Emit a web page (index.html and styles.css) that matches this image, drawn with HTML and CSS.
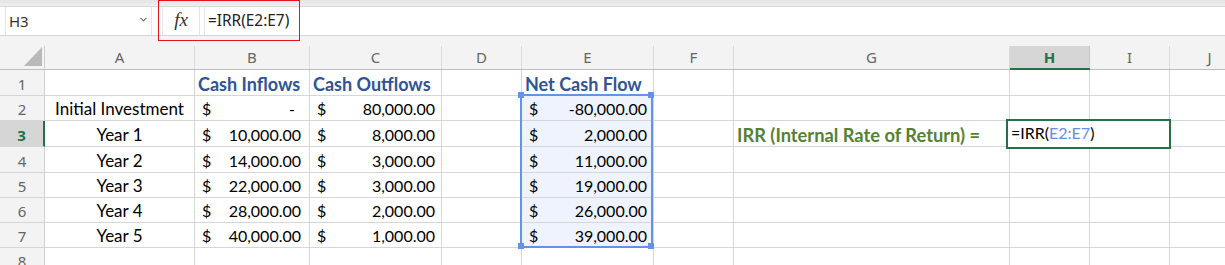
FILE: index.html
```html
<!DOCTYPE html>
<html>
<head>
<meta charset="utf-8">
<link rel="stylesheet" href="styles.css">
</head>
<body>
<div class="app">
  <div class="chrome"></div>
  <div class="fbar">
    <div class="namebox"><span class="nb-text">H3</span><svg class="chev" width="7" height="5" viewBox="0 0 7 5"><path d="M0.5 0.8 L3.5 3.8 L6.5 0.8" fill="none" stroke="#666" stroke-width="1.1"/></svg></div>
    <div class="fx">fx</div>
    <div class="formula">=IRR(E2:E7)</div>
  </div>
  <div class="sheet">
    <div class="row hdr">
      <div class="ch rhw"><span class="corner"><svg width="44" height="23" viewBox="0 0 44 23"><polygon points="42,1 42,20 24,20" fill="#b9b9b9"/></svg></span></div>
      <div class="ch cA"><span>A</span></div>
      <div class="ch cB"><span>B</span></div>
      <div class="ch cC"><span>C</span></div>
      <div class="ch cD"><span>D</span></div>
      <div class="ch cE"><span>E</span></div>
      <div class="ch cF"><span>F</span></div>
      <div class="ch cG"><span>G</span></div>
      <div class="ch cH on"><span>H</span></div>
      <div class="ch cI"><span>I</span></div>
      <div class="ch cJ"><span>J</span></div>
    </div>

    <div class="row h26">
      <div class="rh">1</div>
      <div class="c cA"></div>
      <div class="c cB head">Cash Inflows</div>
      <div class="c cC head">Cash Outflows</div>
      <div class="c cD"></div>
      <div class="c cE head">Net Cash Flow</div>
      <div class="c cF"></div>
      <div class="c cG"></div>
      <div class="c cH"></div>
      <div class="c cI"></div>
      <div class="c cJ"></div>
    </div>

    <div class="row h25">
      <div class="rh">2</div>
      <div class="c cA center">Initial Investment</div>
      <div class="c cB acc"><span>$</span><span class="dash">-</span></div>
      <div class="c cC acc"><span>$</span><span>80,000.00</span></div>
      <div class="c cD"></div>
      <div class="c cE acc sel"><span>$</span><span>-80,000.00</span></div>
      <div class="c cF"></div>
      <div class="c cG"></div>
      <div class="c cH"></div>
      <div class="c cI"></div>
      <div class="c cJ"></div>
    </div>

    <div class="row h26">
      <div class="rh on">3</div>
      <div class="c cA center">Year 1</div>
      <div class="c cB acc"><span>$</span><span>10,000.00</span></div>
      <div class="c cC acc"><span>$</span><span>8,000.00</span></div>
      <div class="c cD"></div>
      <div class="c cE acc sel"><span>$</span><span>2,000.00</span></div>
      <div class="c cF"></div>
      <div class="c cG irr">IRR (Internal Rate of Return) =</div>
      <div class="c cH"></div>
      <div class="c cI"></div>
      <div class="c cJ"></div>
    </div>

    <div class="row h26">
      <div class="rh">4</div>
      <div class="c cA center">Year 2</div>
      <div class="c cB acc"><span>$</span><span>14,000.00</span></div>
      <div class="c cC acc"><span>$</span><span>3,000.00</span></div>
      <div class="c cD"></div>
      <div class="c cE acc sel"><span>$</span><span>11,000.00</span></div>
      <div class="c cF"></div>
      <div class="c cG"></div>
      <div class="c cH"></div>
      <div class="c cI"></div>
      <div class="c cJ"></div>
    </div>

    <div class="row h25">
      <div class="rh">5</div>
      <div class="c cA center">Year 3</div>
      <div class="c cB acc"><span>$</span><span>22,000.00</span></div>
      <div class="c cC acc"><span>$</span><span>3,000.00</span></div>
      <div class="c cD"></div>
      <div class="c cE acc sel"><span>$</span><span>19,000.00</span></div>
      <div class="c cF"></div>
      <div class="c cG"></div>
      <div class="c cH"></div>
      <div class="c cI"></div>
      <div class="c cJ"></div>
    </div>

    <div class="row h25">
      <div class="rh">6</div>
      <div class="c cA center">Year 4</div>
      <div class="c cB acc"><span>$</span><span>28,000.00</span></div>
      <div class="c cC acc"><span>$</span><span>2,000.00</span></div>
      <div class="c cD"></div>
      <div class="c cE acc sel"><span>$</span><span>26,000.00</span></div>
      <div class="c cF"></div>
      <div class="c cG"></div>
      <div class="c cH"></div>
      <div class="c cI"></div>
      <div class="c cJ"></div>
    </div>

    <div class="row h25">
      <div class="rh">7</div>
      <div class="c cA center">Year 5</div>
      <div class="c cB acc"><span>$</span><span>40,000.00</span></div>
      <div class="c cC acc"><span>$</span><span>1,000.00</span></div>
      <div class="c cD"></div>
      <div class="c cE acc sel"><span>$</span><span>39,000.00</span></div>
      <div class="c cF"></div>
      <div class="c cG"></div>
      <div class="c cH"></div>
      <div class="c cI"></div>
      <div class="c cJ"></div>
    </div>

    <div class="row h25">
      <div class="rh r8">8</div>
      <div class="c cA"></div>
      <div class="c cB"></div>
      <div class="c cC"></div>
      <div class="c cD"></div>
      <div class="c cE"></div>
      <div class="c cF"></div>
      <div class="c cG"></div>
      <div class="c cH"></div>
      <div class="c cI"></div>
      <div class="c cJ"></div>
    </div>

    <div class="range"><i class="hd tl"></i><i class="hd tr"></i><i class="hd bl"></i><i class="hd br"></i></div>
    <div class="editor">=IRR(<span class="ref">E2:E7</span>)</div>
  </div>
  <div class="redbox"></div>
</div>
</body>
</html>
```

FILE: styles.css
```css
* { box-sizing: border-box; }
html, body { margin: 0; padding: 0; background: #fff; }

.app {
  position: relative;
  width: 1225px;
  height: 265px;
  overflow: hidden;
  background: #fff;
}

.chrome {
  height: 7px;
  background: linear-gradient(#e4e4e4, #efefef);
  border-bottom: 1px solid #d8d8d8;
}

.fbar {
  height: 29px;
  display: flex;
  align-items: stretch;
  border-bottom: 1px solid #d6d6d6;
  background: #fff;
  font-family: "Noto Sans", "Open Sans", sans-serif;
  color: #222;
}

.namebox {
  margin-left: 5px;
  width: 147px;
  border-left: 1px solid #e6e6e6;
  border-right: 1px solid #e6e6e6;
  display: flex;
  align-items: center;
  justify-content: space-between;
  padding: 0 4px 0 3px;
}
.nb-text { font-size: 15px; color: #333; line-height: 20px; padding-bottom: 1px; }
.chev { margin-bottom: 4px; }

.fx {
  margin-left: 10px;
  width: 38px;
  border-left: 1px solid #e6e6e6;
  border-right: 1px solid #e6e6e6;
  display: flex;
  align-items: center;
  justify-content: center;
  font-family: "Liberation Serif", "DejaVu Serif", serif;
  font-style: italic;
  font-size: 19px;
  color: #333;
  padding-bottom: 2px;
}

.formula {
  margin-left: 4px;
  flex: 1;
  border-left: 1px solid #e6e6e6;
  display: flex;
  align-items: center;
  padding-left: 3px;
  font-size: 15.4px;
  color: #222;
  padding-bottom: 1px;
}

.redbox {
  position: absolute;
  left: 158px;
  top: 0;
  width: 142px;
  height: 41px;
  border: 1px solid #e3141c;
}

.sheet {
  position: relative;
  font-family: Lato, "Liberation Sans", sans-serif;
  font-size: 17px;
  color: #000;
}

.row { display: flex; }
.row > * { flex-shrink: 0; }
.hdr { height: 34px; }
.h26 { height: 26px; }
.h25 { height: 25px; }

.rhw, .rh { width: 45px; }
.cA { width: 150px; }
.cB { width: 115px; }
.cC { width: 132px; }
.cD { width: 80px; }
.cE { width: 132px; }
.cF { width: 80px; }
.cG { width: 276px; }
.cH { width: 80px; }
.cI { width: 80px; }
.cJ { width: 80px; }

/* column headers */
.ch {
  background: #f3f3f3;
  padding-top: 10px;
  border-bottom: 1px solid #bdbdbd;
  font-family: "Noto Sans", "Open Sans", sans-serif;
  font-size: 15px;
  color: #666;
}
.ch > span {
  display: block;
  height: 23px;
  line-height: 23px;
  text-align: center;
  border-right: 1px solid #dadada;
}
.ch > .corner { border-right-color: #cfcfcf; }
.corner svg { display: block; }
.ch.on { border-bottom: 2px solid #217346; }
.ch.on > span {
  height: 22px;
  background: #d6d6d6;
  color: #217346;
  font-weight: 700;
  border-right-color: #c8c8c8;
}

/* row headers */
.rh {
  background: #f3f3f3;
  border-right: 1px solid #cfcfcf;
  border-bottom: 1px solid #d6d6d6;
  font-family: "Noto Sans", "Open Sans", sans-serif;
  font-size: 15px;
  color: #666;
  display: flex;
  align-items: flex-end;
  justify-content: center;
  line-height: 20px;
  padding-bottom: 1px;
}
.rh.r8 { align-items: flex-start; padding-top: 3px; }
.rh.on {
  background: #d6d6d6;
  color: #217346;
  font-weight: 700;
  border-right: 2px solid #217346;
}

/* cells */
.c {
  border-right: 1px solid #d6d6d6;
  border-bottom: 1px solid #d6d6d6;
  display: flex;
  align-items: flex-end;
  line-height: 20px;
  padding: 0 3px 1px 3px;
  white-space: nowrap;
  overflow: visible;
}
.center { justify-content: center; }
.head { font-weight: 700; color: #2f5496; font-size: 18px; }
.acc {
  justify-content: space-between;
  padding-left: 7px;
  padding-right: 8px;
  font-size: 16px;
}
.cC.acc, .cE.acc { padding-right: 6px; }
.dash { padding-right: 6px; }
.sel { background: #eef3fd; }
.irr { font-weight: 700; color: #548235; padding-left: 3px; font-size: 18.3px; }

/* selection range E2:E7 */
.range {
  position: absolute;
  left: 520px;
  top: 58px;
  width: 133px;
  height: 154px;
  border: 2px solid #6492ea;
  pointer-events: none;
}
.hd {
  position: absolute;
  width: 6px;
  height: 6px;
  background: #6492ea;
}
.tl { left: -4px; top: -4px; }
.tr { right: -3px; top: -4px; }
.bl { left: -4px; bottom: -3px; }
.br { right: -3px; bottom: -3px; }

/* active cell editor */
.editor {
  position: absolute;
  left: 1006px;
  top: 83px;
  width: 165px;
  height: 30px;
  border: 2px solid #217346;
  background: #fff;
  padding: 2px 0 0 3px;
  line-height: 20px;
  font-size: 16px;
  white-space: nowrap;
}
.ref { color: #668ee8; }
```
